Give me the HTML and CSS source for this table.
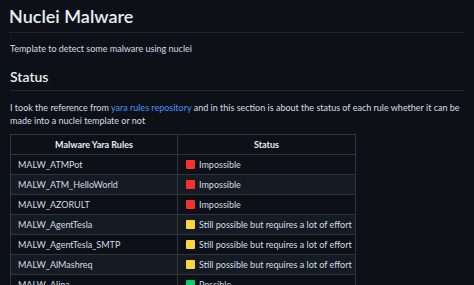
FILE: index.html
```html
<!DOCTYPE html>
<html lang="en">
<head>
    <meta charset="UTF-8">
    <meta name="viewport" content="width=device-width, initial-scale=1.0">
    <title>Nuclei Malware</title>
    <link rel="stylesheet" href="styles.css">
</head>
<body>
    <div class="markdown-body">
        <h1>Nuclei Malware</h1>
        <p class="lead">Template to detect some malware using nuclei</p>

        <h2>Status</h2>
        <p class="intro">I took the reference from <a href="#">yara rules repository</a> and in this section is about the status of each rule whether it can be made into a nuclei template or not</p>

        <table class="status-table">
            <thead>
                <tr>
                    <th class="col-rule">Malware Yara Rules</th>
                    <th class="col-status">Status</th>
                </tr>
            </thead>
            <tbody>
                <tr>
                    <td>MALW_ATMPot</td>
                    <td><span class="dot red"></span>Impossible</td>
                </tr>
                <tr>
                    <td>MALW_ATM_HelloWorld</td>
                    <td><span class="dot red"></span>Impossible</td>
                </tr>
                <tr>
                    <td>MALW_AZORULT</td>
                    <td><span class="dot red"></span>Impossible</td>
                </tr>
                <tr>
                    <td>MALW_AgentTesla</td>
                    <td><span class="dot yellow"></span>Still possible but requires a lot of effort</td>
                </tr>
                <tr>
                    <td>MALW_AgentTesla_SMTP</td>
                    <td><span class="dot yellow"></span>Still possible but requires a lot of effort</td>
                </tr>
                <tr>
                    <td>MALW_AlMashreq</td>
                    <td><span class="dot yellow"></span>Still possible but requires a lot of effort</td>
                </tr>
                <tr>
                    <td>MALW_Alina</td>
                    <td><span class="dot green"></span>Possible</td>
                </tr>
            </tbody>
        </table>
    </div>
</body>
</html>
```

FILE: styles.css
```css
html, body {
    background-color: #0d1117;
}
body {
    font-family: 'Segoe UI', Lato, 'Noto Sans', sans-serif;
    font-size: 9px;
    line-height: 13px;
    color: #d6dce4;
    margin: 0;
    padding: 6px 10px 0 8px;
    overflow: hidden;
}
.markdown-body {
    width: 456px;
}
h1 {
    font-size: 18px;
    font-weight: 600;
    line-height: 21px;
    color: #e6edf3;
    margin: 0 0 0 1px;
    padding-bottom: 5px;
    border-bottom: 1px solid #21262d;
}
.lead {
    margin: 9px 0 0 2px;
}
h2 {
    font-size: 14px;
    font-weight: 600;
    line-height: 18px;
    color: #e6edf3;
    margin: 13px 0 0 2px;
    padding-bottom: 4px;
    border-bottom: 1px solid #21262d;
}
.intro {
    margin: 10px 0 0 2px;
}
a {
    color: #4493f8;
    text-decoration: none;
}
.status-table {
    border-collapse: collapse;
    table-layout: fixed;
    margin: 7px 0 0 2px;
    width: 346px;
}
.status-table th,
.status-table td {
    border: 1px solid #30363d;
    padding: 3px 7px;
    text-align: left;
    white-space: nowrap;
    overflow: hidden;
}
.status-table th {
    font-weight: 700;
    text-align: center;
    color: #e6edf3;
}
.col-rule {
    width: 152px;
}
.status-table tbody tr:nth-child(even) {
    background-color: #151b23;
}
.dot {
    display: inline-block;
    width: 9px;
    height: 9px;
    border-radius: 1px;
    margin: 0 4px 0 1px;
    vertical-align: -1px;
}
.red {
    background-color: #f8312f;
}
.yellow {
    background-color: #fcd53f;
}
.green {
    background-color: #00d26a;
}
```
